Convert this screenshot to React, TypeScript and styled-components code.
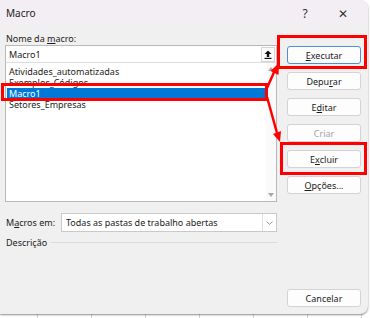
import styled, { createGlobalStyle } from 'styled-components';

const Global = createGlobalStyle`
  html, body {
    margin: 0;
    padding: 0;
  }
  body {
    font-family: 'Noto Sans', 'Open Sans', sans-serif;
    font-size: 9px;
    color: #1b1b1b;
  }
`;

const Screen = styled.div`
  position: relative;
  width: 370px;
  height: 318px;
  overflow: hidden;
  background: #ffffff;
  background-image: linear-gradient(90deg, #d4d4d4 1px, transparent 1px);
  background-size: 54px 100%;
  background-position: 37px 0;
`;

const Dialog = styled.div`
  width: 368px;
  height: 314px;
  display: flex;
  flex-direction: column;
  background: #f0f0f0;
  border-radius: 0 8px 8px 0;
  box-shadow: 0 1px 2px rgba(0, 0, 0, 0.45);
  overflow: hidden;
`;

const TitleBar = styled.div`
  height: 26px;
  display: flex;
  align-items: center;
  padding-left: 6px;
  background: #f3eef3;
  font-size: 10px;
`;

const TitleText = styled.span`
  flex: 1;
`;

const TitleButton = styled.span<{ $w: number }>`
  width: ${(p) => p.$w}px;
  text-align: center;
  font-size: 12px;
  color: #333;
`;

const Body = styled.div`
  flex: 1;
  display: grid;
  grid-template-columns: 272px 74px;
  column-gap: 10px;
  padding: 6px 0 7px 5px;
`;

const LeftCol = styled.div`
  display: flex;
  flex-direction: column;
`;

const RightCol = styled.div`
  display: flex;
  flex-direction: column;
  gap: 8px;
  padding-top: 14px;
`;

const Label = styled.div`
  height: 13px;
  line-height: 13px;
  padding-left: 1px;
`;

const Key = styled.span`
  text-decoration: underline;
`;

const Field = styled.div`
  height: 17px;
  display: flex;
  align-items: center;
  justify-content: space-between;
  background: #fff;
  border: 1px solid #b9b9b9;
  border-bottom: none;
  box-sizing: border-box;
  padding: 0 1px 0 3px;
`;

const UpButton = styled.span`
  width: 12px;
  height: 13px;
  display: flex;
  align-items: center;
  justify-content: center;
  border: 1px solid #d5d5d5;
  background: #fbfbfb;
`;

const List = styled.div`
  height: 140px;
  box-sizing: border-box;
  display: flex;
  background: #fff;
  border: 1px solid #b9b9b9;
  border-top-color: #dcdcdc;
`;

const Rows = styled.div`
  flex: 1;
  padding: 3px 0 0 1px;
`;

const Row = styled.div<{ $sel?: boolean }>`
  height: 11px;
  line-height: 11px;
  padding-left: 2px;
  white-space: nowrap;
  background: ${(p) => (p.$sel ? '#0078d7' : 'transparent')};
  color: ${(p) => (p.$sel ? '#fff' : '#1b1b1b')};
`;

const Scroll = styled.div`
  width: 10px;
  display: flex;
  flex-direction: column;
  justify-content: space-between;
  align-items: center;
  padding: 4px 0;
  background: #fafafa;
`;

const Tri = styled.span<{ $down?: boolean }>`
  width: 0;
  height: 0;
  border-left: 3px solid transparent;
  border-right: 3px solid transparent;
  ${(p) =>
    p.$down ? 'border-top: 4px solid #a8a8a8;' : 'border-bottom: 4px solid #a8a8a8;'}
`;

const MacrosRow = styled.div`
  display: flex;
  align-items: center;
  margin-top: 11px;
  height: 19px;
`;

const MacrosLabel = styled.div`
  width: 55px;
  padding-left: 1px;
`;

const Select = styled.div`
  flex: 1;
  height: 19px;
  box-sizing: border-box;
  display: flex;
  align-items: center;
  background: #fff;
  border: 1px solid #c9c9c9;
  padding-left: 4px;
`;

const SelectText = styled.span`
  flex: 1;
`;

const Chevron = styled.span`
  width: 13px;
  height: 17px;
  display: flex;
  align-items: center;
  justify-content: center;
  border-left: 1px solid #dedede;
`;

const Group = styled.div`
  display: flex;
  align-items: center;
  gap: 4px;
  margin-top: 1px;
  height: 18px;
  padding-left: 1px;

  &::after {
    content: '';
    flex: 1;
    height: 1px;
    background: #dcdcdc;
  }
`;

const Button = styled.div<{ $primary?: boolean; $disabled?: boolean }>`
  height: 18px;
  box-sizing: border-box;
  display: flex;
  align-items: center;
  justify-content: center;
  background: #fdfdfd;
  border: 1px solid ${(p) => (p.$primary ? '#4f8fd0' : '#d3d3d3')};
  border-radius: 3px;
  color: ${(p) => (p.$disabled ? '#a3a3a3' : '#1b1b1b')};
`;

const Bottom = styled.div`
  margin-top: auto;
`;

const Overlay = styled.svg`
  position: absolute;
  left: 0;
  top: 0;
  pointer-events: none;
`;

export default function App() {
  return (
    <Screen>
      <Global />
      <Dialog>
        <TitleBar>
          <TitleText>Macro</TitleText>
          <TitleButton $w={26}>?</TitleButton>
          <TitleButton $w={50}>✕</TitleButton>
        </TitleBar>
        <Body>
          <LeftCol>
            <Label>
              Nome da <Key>m</Key>acro:
            </Label>
            <Field>
              <span>Macro1</span>
              <UpButton>
                <svg width="8" height="9" viewBox="0 0 8 9">
                  <path d="M4 0.5 L7.5 4 H5.2 V7 H2.8 V4 H0.5 Z" fill="#111" />
                  <rect x="0.5" y="7.8" width="7" height="1.2" fill="#111" />
                </svg>
              </UpButton>
            </Field>
            <List>
              <Rows>
                <Row>Atividades_automatizadas</Row>
                <Row>Exemplos_Códigos</Row>
                <Row $sel>Macro1</Row>
                <Row>Setores_Empresas</Row>
              </Rows>
              <Scroll>
                <Tri />
                <Tri $down />
              </Scroll>
            </List>
            <MacrosRow>
              <MacrosLabel>
                M<Key>a</Key>cros em:
              </MacrosLabel>
              <Select>
                <SelectText>Todas as pastas de trabalho abertas</SelectText>
                <Chevron>
                  <svg width="7" height="4" viewBox="0 0 7 4">
                    <path d="M0.5 0.5 L3.5 3.3 L6.5 0.5" stroke="#777" fill="none" strokeWidth="0.8" />
                  </svg>
                </Chevron>
              </Select>
            </MacrosRow>
            <Group>Descrição</Group>
          </LeftCol>
          <RightCol>
            <Button $primary>
              <Key>E</Key>xecutar
            </Button>
            <Button>
              Depu<Key>r</Key>ar
            </Button>
            <Button>
              E<Key>d</Key>itar
            </Button>
            <Button $disabled>Criar</Button>
            <Button>
              E<Key>x</Key>cluir
            </Button>
            <Button>
              <Key>O</Key>pções...
            </Button>
            <Bottom>
              <Button>Cancelar</Button>
            </Bottom>
          </RightCol>
        </Body>
      </Dialog>
      <Overlay width="370" height="318" viewBox="0 0 370 318">
        <g fill="none" stroke="#ff0000" strokeWidth="3">
          <rect x="2.5" y="84.5" width="264" height="15" />
          <rect x="278.5" y="36.5" width="87" height="31" />
          <rect x="281.5" y="143.5" width="84" height="30" />
          <path d="M267 88 L275 70" strokeWidth="2.5" />
          <path d="M267 97 L277 133" strokeWidth="2.5" />
        </g>
        <g fill="#ff0000">
          <path d="M279 63 L278.5 75 L270.5 71 Z" />
          <path d="M280 142 L273 134 L281 131 Z" />
        </g>
      </Overlay>
    </Screen>
  );
}
